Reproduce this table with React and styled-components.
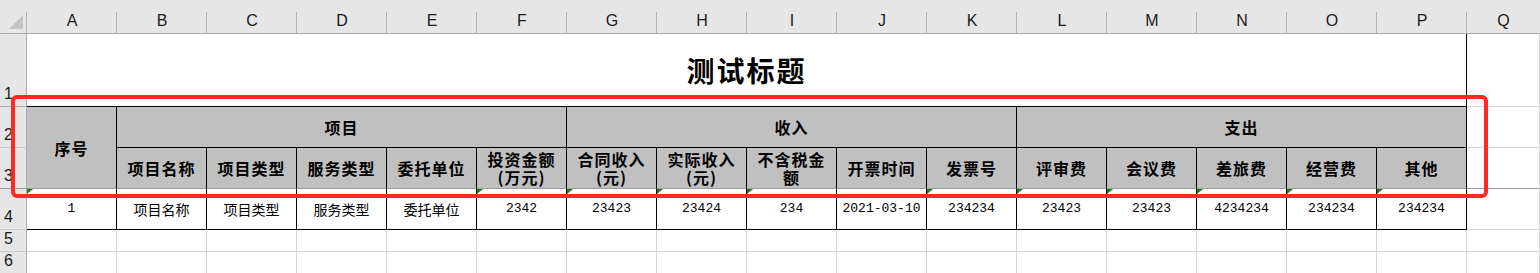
import React from 'react';
import styled, { createGlobalStyle, css } from 'styled-components';

const GlobalStyle = createGlobalStyle`
  html, body {
    margin: 0;
    padding: 0;
    background: #ffffff;
  }
  body {
    font-family: "Noto Sans CJK SC", sans-serif;
    overflow: hidden;
  }
`;

const Sheet = styled.div`
  position: relative;
  display: grid;
  grid-template-columns: 27px repeat(16, 90px) 1fr;
  grid-template-rows: 34px 73px 41px 41px 41px 22px 22px;
  width: 1540px;
  height: 273px;
  overflow: hidden;
`;

// column letters strip
const ColHead = styled.div`
  box-sizing: border-box;
  display: flex;
  align-items: flex-end;
  justify-content: center;
  padding-bottom: 4px;
  border-bottom: 1px solid #ababab;
  background: ${p => (p.$last ? '#e6e6e6' : 'linear-gradient(#b4b4b4, #b4b4b4) no-repeat right bottom / 1px 21px, #e6e6e6')};
  font-family: "Liberation Sans", Arial, sans-serif;
  font-size: 16px;
  line-height: 1;
  color: #1a1a1a;
`;

const Corner = styled(ColHead)`
  align-items: flex-start;
  justify-content: flex-start;
  padding: 15px 0 0 9px;
`;

const RowHead = styled.div`
  box-sizing: border-box;
  display: flex;
  align-items: flex-end;
  padding: 0 0 4px 4px;
  background: #e6e6e6;
  border-right: 1px solid #ababab;
  border-bottom: 1px solid ${p => p.$under || '#c8c8c8'};
  font-family: "Liberation Sans", Arial, sans-serif;
  font-size: 16px;
  line-height: 1;
  color: #1a1a1a;
`;

const Cell = styled.div`
  position: relative;
  box-sizing: border-box;
  display: flex;
  flex-direction: column;
  align-items: center;
  justify-content: center;
  text-align: center;
  grid-column: span ${p => p.$span || 1};
  grid-row: span ${p => p.$rows || 1};
  background: ${p => (p.$head ? '#c0c0c0' : '#ffffff')};
  border-right: 1px solid ${p => p.$line || '#d4d4d4'};
  border-bottom: 1px solid ${p => p.$under || p.$line || '#d4d4d4'};
  font-size: 14px;
  line-height: 18px;
  color: #000;
  ${p => p.$head && css`
    font-weight: 700;
    font-size: 16px;
    letter-spacing: 1px;
  `}
  ${p => p.$flag && css`
    &::before {
      content: '';
      position: absolute;
      left: 0;
      top: 0;
      border-top: 5px solid #1b7f1b;
      border-right: 6px solid transparent;
    }
  `}
`;

const Line = styled.span`
  display: block;
  height: 18px;
  line-height: 18px;
`;

const Title = styled(Cell)`
  font-size: 28px;
  font-weight: 700;
  letter-spacing: 2px;
`;

const Num = styled.span`
  font-family: "Liberation Mono", monospace;
  font-size: 13px;
`;

const Highlight = styled.div`
  position: absolute;
  left: 11px;
  top: 95px;
  width: 1477px;
  height: 103px;
  box-sizing: border-box;
  border: 4px solid #ff2a1f;
  border-radius: 6px;
  pointer-events: none;
`;

const letters = 'ABCDEFGHIJKLMNOPQ'.split('');
const BLACK = '#000';
const FREEZE = '#9c9c9c';

const subHeads = [
  ['项目名称'], ['项目类型'], ['服务类型'], ['委托单位'], ['投资金额', '(万元)'],
  ['合同收入', '(元)'], ['实际收入', '(元)'], ['不含税金', '额'], ['开票时间'], ['发票号'],
  ['评审费'], ['会议费'], ['差旅费'], ['经营费'], ['其他'],
];

const dataRow = [
  { v: '1', num: true, flag: true },
  { v: '项目名称' },
  { v: '项目类型' },
  { v: '服务类型' },
  { v: '委托单位' },
  { v: '2342', num: true, flag: true },
  { v: '23423', num: true, flag: true },
  { v: '23424', num: true, flag: true },
  { v: '234', num: true, flag: true },
  { v: '2021-03-10', num: true },
  { v: '234234', num: true, flag: true },
  { v: '23423', num: true, flag: true },
  { v: '23423', num: true, flag: true },
  { v: '4234234', num: true, flag: true },
  { v: '234234', num: true, flag: true },
  { v: '234234', num: true, flag: true },
];

export default function App() {
  return (
    <>
      <GlobalStyle />
      <Sheet>
        <Corner>
          <svg width="14" height="14" viewBox="0 0 14 14">
            <polygon points="14,0 14,14 0,14" fill="#c4c4c4" />
          </svg>
        </Corner>
        {letters.map((l, i) => (
          <ColHead key={l} $last={i === letters.length - 1}>{l}</ColHead>
        ))}

        <RowHead $under="#ababab">1</RowHead>
        <Title $span={16} $line={BLACK}>测试标题</Title>
        <Cell />

        <RowHead>2</RowHead>
        <Cell $head $rows={2} $line={BLACK} $under={FREEZE}>序号</Cell>
        <Cell $head $span={5} $line={BLACK}>项目</Cell>
        <Cell $head $span={5} $line={BLACK}>收入</Cell>
        <Cell $head $span={5} $line={BLACK}>支出</Cell>
        <Cell />

        <RowHead $under={FREEZE}>3</RowHead>
        {subHeads.map((lines, i) => (
          <Cell key={i} $head $line={BLACK} $under={FREEZE}>
            {lines.length > 1
              ? lines.map((t, j) => <Line key={j}>{t}</Line>)
              : lines[0]}
          </Cell>
        ))}
        <Cell $under={FREEZE} />

        <RowHead>4</RowHead>
        {dataRow.map((d, i) => (
          <Cell key={i} $line={BLACK} $flag={d.flag}>
            {d.num ? <Num>{d.v}</Num> : d.v}
          </Cell>
        ))}
        <Cell />

        <RowHead>5</RowHead>
        {letters.map(l => <Cell key={l} />)}

        <RowHead>6</RowHead>
        {letters.map(l => <Cell key={l} />)}

        <Highlight />
      </Sheet>
    </>
  );
}
